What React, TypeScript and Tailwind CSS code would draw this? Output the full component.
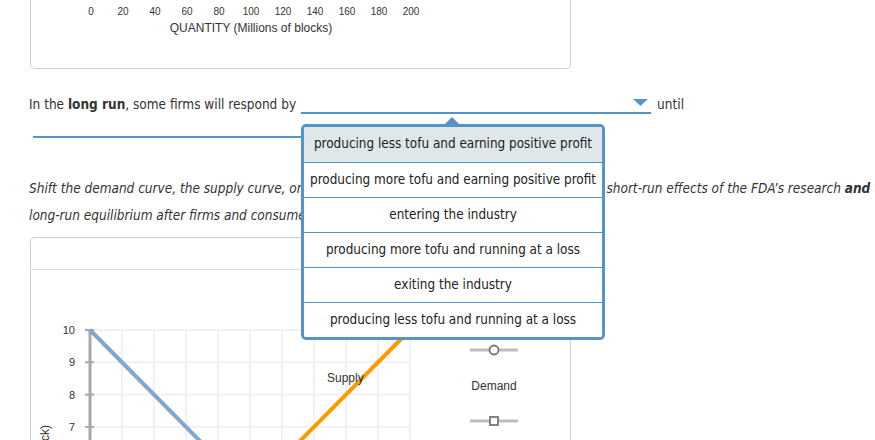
import React from "react"

const ticksX = [0, 20, 40, 60, 80, 100, 120, 140, 160, 180, 200]

const options = [
  "producing less tofu and earning positive profit",
  "producing more tofu and earning positive profit",
  "entering the industry",
  "producing more tofu and running at a loss",
  "exiting the industry",
  "producing less tofu and running at a loss",
]

// chart space: page coords shifted by the svg's top-left (31, 270)
const OX = 59
const OY = 60
const SX = 32
const SY = 32.3

function px(q: number) {
  return OX + (q / 20) * SX
}
function py(p: number) {
  return OY + (10 - p) * SY
}

function Chart() {
  return (
    <svg width="410" height="171" className="block shrink-0" style={{ fontFamily: '"Liberation Sans", Arial, sans-serif' }}>
      {ticksX.map((q) => (
        <line key={"v" + q} x1={px(q)} x2={px(q)} y1={OY} y2={171} stroke="#f1f1f1" strokeWidth="2" />
      ))}
      {[10, 9, 8, 7, 6].map((p) => (
        <line key={"h" + p} x1={OX} x2={px(200)} y1={py(p)} y2={py(p)} stroke="#f1f1f1" strokeWidth="2" />
      ))}
      <line x1={OX} x2={OX} y1={OY} y2={171} stroke="#a9a9a9" strokeWidth="3" />
      {[10, 9, 8, 7].map((p) => (
        <g key={"t" + p}>
          <line x1={OX - 5} x2={OX + 4} y1={py(p)} y2={py(p)} stroke="#a9a9a9" strokeWidth="2" />
          <text x={OX - 15} y={py(p) + 4} textAnchor="end" fontSize="11" fill="#333">
            {p}
          </text>
        </g>
      ))}
      <text x="18" y="155" transform="rotate(-90 18 155)" textAnchor="end" fontSize="12" fill="#333">
        PRICE (Dollars per block)
      </text>
      <line x1={px(0)} y1={py(10)} x2={px(200)} y2={py(0)} stroke="#7ea7d2" strokeWidth="4" />
      <line x1={px(0)} y1={py(0)} x2={px(200)} y2={py(10)} stroke="#ff9900" strokeWidth="4" />
      <text x="296" y="112" fontSize="12" fill="#333">
        Supply
      </text>
    </svg>
  )
}

function LegendIcon({ shape }: { shape: "circle" | "square" | "triangle" }) {
  return (
    <svg width="50" height="12" className="block">
      <line x1="1" x2="49" y1="6" y2="6" stroke="#bdbdbd" strokeWidth="3" />
      {shape === "circle" && <circle cx="25" cy="6" r="4.5" fill="#fff" stroke="#757575" strokeWidth="1.8" />}
      {shape === "square" && <rect x="21" y="2" width="8" height="8" fill="#fff" stroke="#757575" strokeWidth="1.8" />}
      {shape === "triangle" && <polygon points="25,1.5 30,10 20,10" fill="#fff" stroke="#757575" strokeWidth="1.8" />}
    </svg>
  )
}

export default function App() {
  return (
    <div
      className="relative w-[875px] h-[440px] overflow-hidden bg-white text-[#333]"
      style={{ fontFamily: '"DejaVu Sans Condensed", "DejaVu Sans", Tahoma, sans-serif' }}
    >
      {/* top graph card, cut off above */}
      <div className="ml-[30px] w-[541px] h-[69px] border border-t-0 border-[#d0d0d0] rounded-b-[5px] font-['Liberation_Sans',Arial,sans-serif]">
        <div className="ml-[44px] pt-[5px] flex text-[10px] leading-[14px] text-[#333]">
          {ticksX.map((q) => (
            <span key={q} className="w-[32px] text-center">
              {q}
            </span>
          ))}
        </div>
        <div className="ml-[60px] w-[320px] text-center text-[12px] leading-[14px] mt-[2px]">
          QUANTITY (Millions of blocks)
        </div>
      </div>

      {/* sentence with dropdown */}
      <div className="mt-[23px] flex h-[22px] items-end pl-[29px] text-[13.5px] leading-[16px]">
        <span className="pb-[2px]">
          In the <b>long run</b>, some firms will respond by
        </span>
        <div className="ml-[5px] flex h-full w-[350px] items-center justify-end border-b-2 border-[#5594c9] pr-[3px]">
          <svg width="15" height="8" className="mt-[1px]">
            <polygon points="0,0 15,0 7.5,7" fill="#5594c9" />
          </svg>
        </div>
        <span className="ml-[6px] pb-[2px]">until</span>
      </div>
      <div className="mt-[2px] ml-[33px] h-[22px] w-[380px] border-b-2 border-[#5594c9]" />

      {/* instructions */}
      <div className="mt-[37px] pl-[29px] text-[13.5px] italic leading-[27px] whitespace-nowrap">
        <div>
          Shift the demand curve, the supply curve, or both on the following graph to illustrate both the short-run
          effects of the FDA’s research <b>and</b> the new
        </div>
        <div>long-run equilibrium after firms and consumers have fully adjusted.</div>
      </div>

      {/* bottom graph card */}
      <div className="mt-[8px] ml-[30px] w-[541px] border border-b-0 border-[#d0d0d0] rounded-t-[5px]">
        <div className="h-[32px] border-b border-[#dcdcdc]" />
        <div className="flex">
          <Chart />
          <div className="flex w-[106px] flex-col items-center pt-[3px] text-[12px] font-['Liberation_Sans',Arial,sans-serif]">
            <LegendIcon shape="triangle" />
            <div className="mt-[23px] leading-[14px]">Supply</div>
            <div className="mt-[22px]">
              <LegendIcon shape="circle" />
            </div>
            <div className="mt-[23px] leading-[14px]">Demand</div>
            <div className="mt-[22px]">
              <LegendIcon shape="square" />
            </div>
          </div>
        </div>
      </div>

      {/* open dropdown popup */}
      <div className="absolute left-[301px] top-[124px] w-[304px]">
        <svg width="18" height="9" className="absolute -top-[7px] left-[142px]">
          <polygon points="0,9 9,0 18,9" fill="#5594c9" />
        </svg>
        <div className="overflow-hidden rounded-[5px] border-[3px] border-[#5594c9] bg-white text-[13.4px] text-[#222]">
          {options.map((o, i) => (
            <div
              key={o}
              className={`flex h-[35px] items-center justify-center whitespace-nowrap ${
                i > 0 ? "border-t border-[#5594c9]" : ""
              } ${i === 0 ? "bg-[#dfe7eb]" : "bg-white"}`}
            >
              {o}
            </div>
          ))}
        </div>
      </div>
    </div>
  )
}
